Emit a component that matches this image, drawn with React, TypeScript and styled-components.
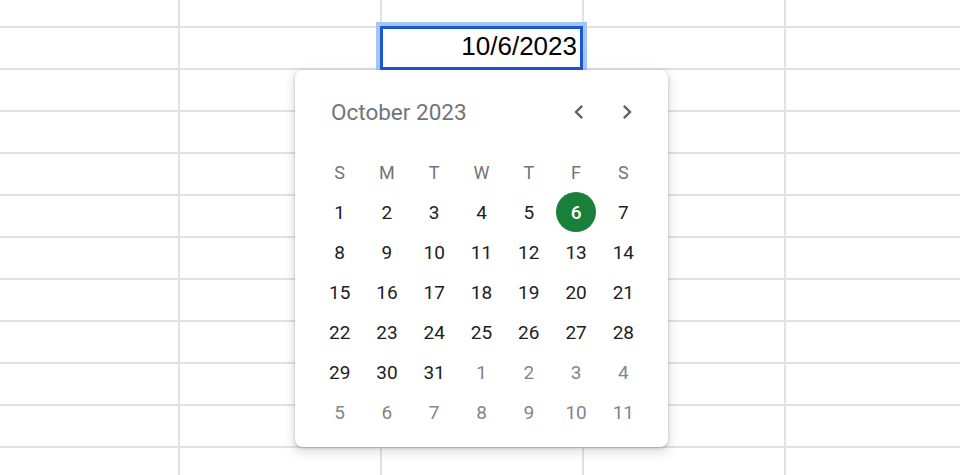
import styled, { createGlobalStyle } from "styled-components";

const GlobalStyle = createGlobalStyle`
  html, body {
    margin: 0;
    padding: 0;
    background: #ffffff;
    overflow: hidden;
  }
`;

const Page = styled.div`
  position: relative;
  width: 960px;
  height: 475px;
  overflow: hidden;
`;

const Sheet = styled.div`
  display: grid;
  grid-template-columns: 178px repeat(3, 200px) 1fr;
  grid-template-rows: 26px repeat(11, 40px);
  gap: 2px;
  background: #e1e1e1;
  width: 960px;
`;

const Cell = styled.div`
  position: relative;
  background: #ffffff;
`;

const EditCell = styled(Cell)`
  display: flex;
  justify-content: flex-end;
  align-items: flex-start;
  padding: 3px 5px 0 0;
  font-family: "Liberation Sans", Arial, sans-serif;
  font-size: 26px;
  line-height: 30px;
  color: #000000;
  z-index: 1;
`;

const Selection = styled.div`
  position: absolute;
  inset: -2px -1px -2px -2px;
  border: 3px solid #1c58d3;
  box-shadow: 0 0 0 4px #a5c4f8;
  pointer-events: none;
`;

const Picker = styled.div`
  position: absolute;
  top: 70px;
  left: 295px;
  z-index: 2;
  width: 373px;
  box-sizing: border-box;
  padding: 22px 21px 15px;
  background: #ffffff;
  border-radius: 8px;
  box-shadow: 0 1px 3px rgba(60, 64, 67, 0.3), 0 4px 10px 3px rgba(60, 64, 67, 0.13);
  font-family: Roboto, "Noto Sans", sans-serif;
`;

const Header = styled.div`
  display: flex;
  align-items: center;
  height: 40px;
  padding-left: 15px;
  margin-bottom: 20px;
`;

const MonthLabel = styled.div`
  flex: 1;
  font-size: 22.5px;
  color: #70757a;
`;

const NavGroup = styled.div`
  display: flex;
  gap: 8px;
`;

const NavButton = styled.button`
  width: 40px;
  height: 40px;
  display: flex;
  align-items: center;
  justify-content: center;
  border: none;
  padding: 0;
  background: transparent;
  border-radius: 50%;
  cursor: pointer;
`;

const Days = styled.div`
  display: grid;
  grid-template-columns: repeat(7, 1fr);
  grid-auto-rows: 40px;
`;

const WeekDay = styled.div`
  display: flex;
  align-items: center;
  justify-content: center;
  font-size: 18px;
  color: #70757a;
`;

const Day = styled.div<{ $muted?: boolean; $selected?: boolean }>`
  display: flex;
  align-items: center;
  justify-content: center;
  font-size: 19px;
  color: ${({ $muted, $selected }) => ($selected ? "#ffffff" : $muted ? "#80868b" : "#202124")};
  font-weight: ${({ $selected }) => ($selected ? 500 : 400)};
`;

const DayCircle = styled.span<{ $selected?: boolean }>`
  width: 40px;
  height: 40px;
  display: flex;
  align-items: center;
  justify-content: center;
  border-radius: 50%;
  background: ${({ $selected }) => ($selected ? "#188038" : "transparent")};
`;

const Chevron = ({ dir }: { dir: "left" | "right" }) => (
  <svg width="28" height="28" viewBox="0 0 24 24" fill="#5f6368">
    {dir === "left" ? (
      <path d="M15.41 7.41L14 6l-6 6 6 6 1.41-1.41L10.83 12z" />
    ) : (
      <path d="M8.59 16.59L10 18l6-6-6-6-1.41 1.41L13.17 12z" />
    )}
  </svg>
);

const weekDays = ["S", "M", "T", "W", "T", "F", "S"];

// October 2023 starts on a Sunday; 6 rows shown
const days: { n: number; muted: boolean }[] = [];
for (let i = 1; i <= 31; i++) days.push({ n: i, muted: false });
for (let i = 1; days.length < 42; i++) days.push({ n: i, muted: true });

function App() {
  const rows = 12;
  const cols = 5;

  return (
    <Page>
      <GlobalStyle />
      <Sheet>
        {Array.from({ length: rows * cols }).map((_, i) => {
          const r = Math.floor(i / cols);
          const c = i % cols;
          if (r === 1 && c === 2) {
            return (
              <EditCell key={i}>
                10/6/2023
                <Selection />
              </EditCell>
            );
          }
          return <Cell key={i} />;
        })}
      </Sheet>

      <Picker>
        <Header>
          <MonthLabel>October 2023</MonthLabel>
          <NavGroup>
            <NavButton aria-label="Previous month">
              <Chevron dir="left" />
            </NavButton>
            <NavButton aria-label="Next month">
              <Chevron dir="right" />
            </NavButton>
          </NavGroup>
        </Header>
        <Days>
          {weekDays.map((d, i) => (
            <WeekDay key={"w" + i}>{d}</WeekDay>
          ))}
          {days.map((d, i) => {
            const selected = !d.muted && d.n === 6;
            return (
              <Day key={i} $muted={d.muted} $selected={selected}>
                <DayCircle $selected={selected}>{d.n}</DayCircle>
              </Day>
            );
          })}
        </Days>
      </Picker>
    </Page>
  );
}

export default App;
